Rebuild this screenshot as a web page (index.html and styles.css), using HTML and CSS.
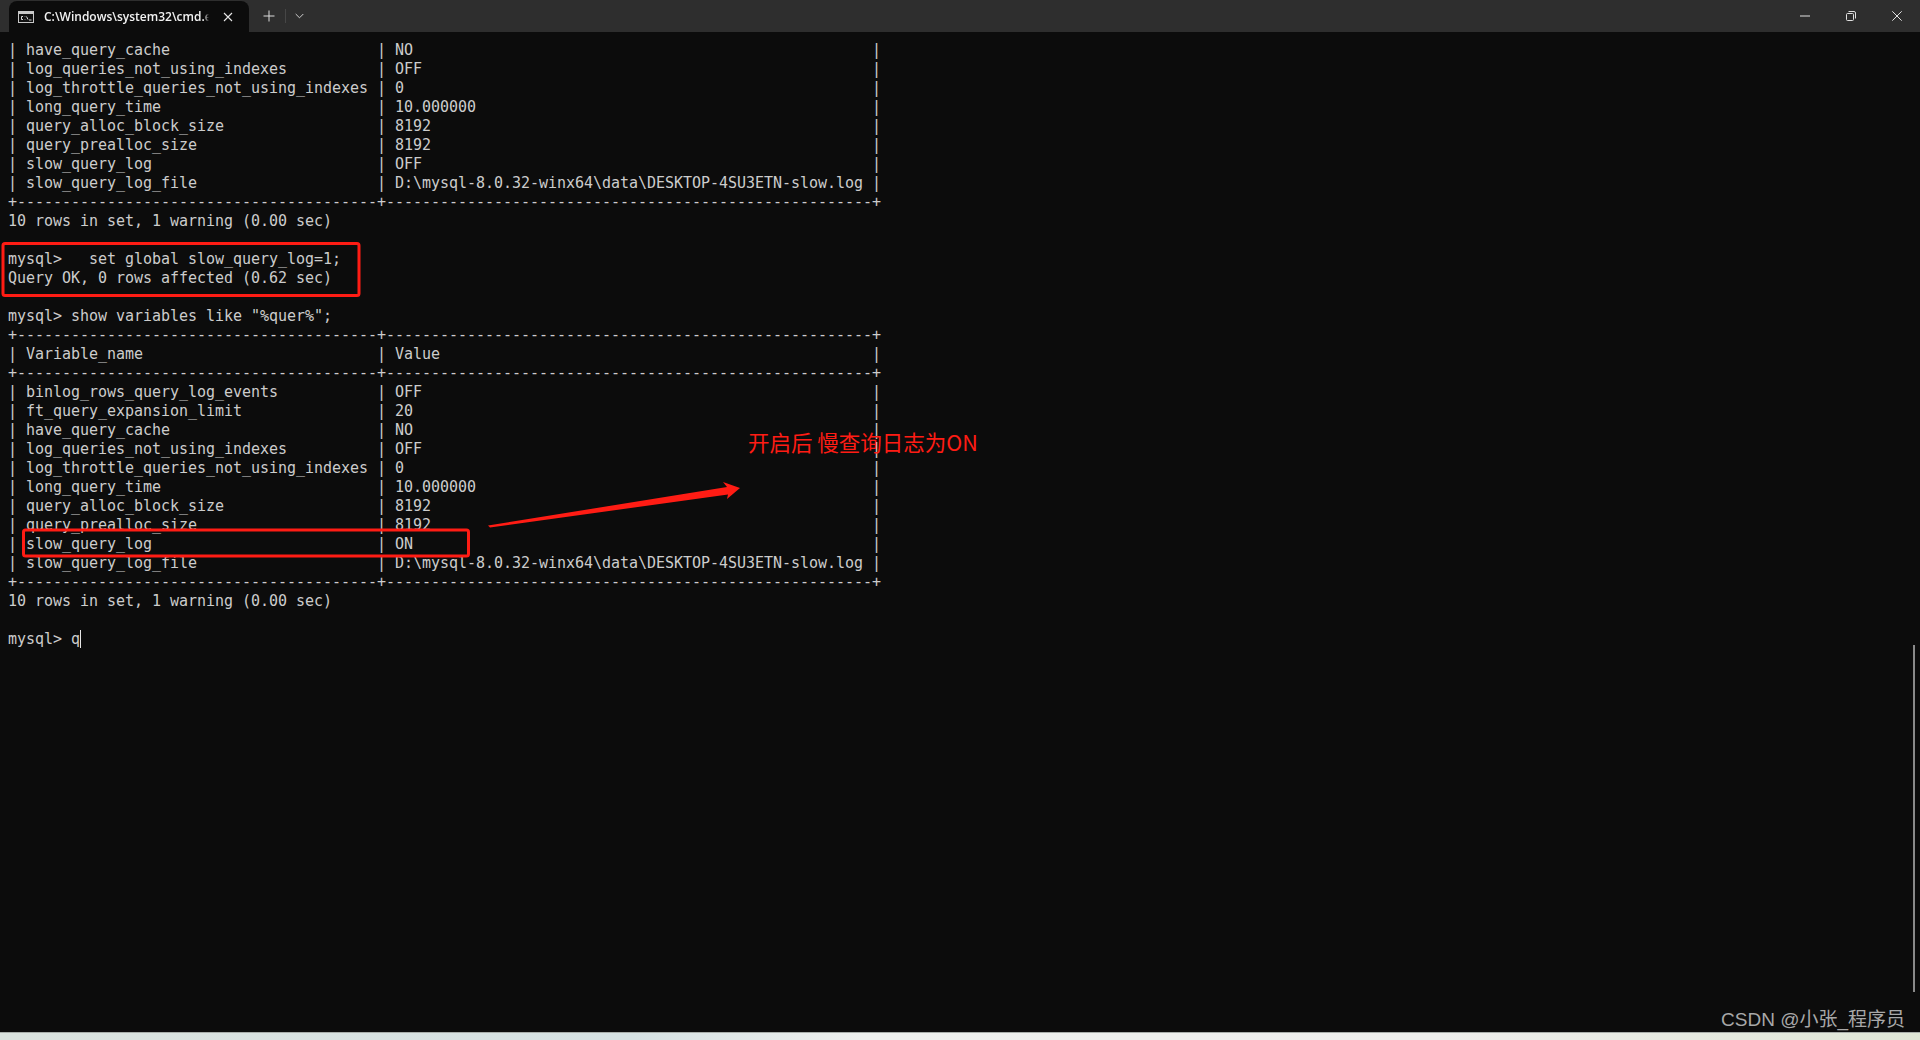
FILE: index.html
```html
<!DOCTYPE html>
<html lang="zh-CN">
<head>
<meta charset="utf-8">
<title>C:\Windows\system32\cmd.exe</title>
<link rel="stylesheet" href="styles.css">
</head>
<body>
<div class="window">
  <header class="titlebar">
    <div class="tab">
      <svg class="tab-icon" width="16" height="12" viewBox="0 0 16 12">
        <rect x="0.5" y="0.5" width="15" height="11" fill="#111" stroke="#c8c8c8"/>
        <rect x="1" y="1" width="14" height="2" fill="#c8c8c8"/>
        <path d="M5 5.5H3.5V8.5H5M7 5.5V6M7 8V8.5M8.5 5.5L10 8.5M11 9H13.5" fill="none" stroke="#d8d8d8" stroke-width="1"/>
      </svg>
      <span class="tab-label">C:\Windows\system32\cmd.exe</span>
      <svg class="tab-close" width="10" height="10" viewBox="0 0 10 10"><path d="M1 1L9 9M9 1L1 9" stroke="#e6e6e6" stroke-width="1.1" fill="none"/></svg>
    </div>
    <div class="new-tab">
      <svg width="12" height="12" viewBox="0 0 12 12"><path d="M6 0.5V11.5M0.5 6H11.5" stroke="#dcdcdc" stroke-width="1" fill="none"/></svg>
    </div>
    <div class="tab-sep"></div>
    <div class="tab-menu">
      <svg width="9" height="6" viewBox="0 0 9 6"><path d="M0.7 1L4.5 4.8L8.3 1" stroke="#d0d0d0" stroke-width="1" fill="none"/></svg>
    </div>
    <div class="controls">
      <div class="control"><svg width="10" height="2" viewBox="0 0 10 2"><path d="M0 1H10" stroke="#e0e0e0" stroke-width="1"/></svg></div>
      <div class="control"><svg width="10" height="10" viewBox="0 0 10 10"><rect x="0.5" y="2.5" width="7" height="7" rx="1" fill="none" stroke="#e0e0e0"/><path d="M2.5 0.5H8A1.5 1.5 0 0 1 9.5 2V7.5" fill="none" stroke="#e0e0e0"/></svg></div>
      <div class="control"><svg width="10" height="10" viewBox="0 0 10 10"><path d="M0.3 0.3L9.7 9.7M9.7 0.3L0.3 9.7" stroke="#e0e0e0" stroke-width="1" fill="none"/></svg></div>
    </div>
  </header>
  <main class="terminal">
<pre class="console">| have_query_cache                       | NO                                                   |
| log_queries_not_using_indexes          | OFF                                                  |
| log_throttle_queries_not_using_indexes | 0                                                    |
| long_query_time                        | 10.000000                                            |
| query_alloc_block_size                 | 8192                                                 |
| query_prealloc_size                    | 8192                                                 |
| slow_query_log                         | OFF                                                  |
| slow_query_log_file                    | D:\mysql-8.0.32-winx64\data\DESKTOP-4SU3ETN-slow.log |
+----------------------------------------+------------------------------------------------------+
10 rows in set, 1 warning (0.00 sec)

mysql>   set global slow_query_log=1;
Query OK, 0 rows affected (0.62 sec)

mysql> show variables like "%quer%";
+----------------------------------------+------------------------------------------------------+
| Variable_name                          | Value                                                |
+----------------------------------------+------------------------------------------------------+
| binlog_rows_query_log_events           | OFF                                                  |
| ft_query_expansion_limit               | 20                                                   |
| have_query_cache                       | NO                                                   |
| log_queries_not_using_indexes          | OFF                                                  |
| log_throttle_queries_not_using_indexes | 0                                                    |
| long_query_time                        | 10.000000                                            |
| query_alloc_block_size                 | 8192                                                 |
| query_prealloc_size                    | 8192                                                 |
| slow_query_log                         | ON                                                   |
| slow_query_log_file                    | D:\mysql-8.0.32-winx64\data\DESKTOP-4SU3ETN-slow.log |
+----------------------------------------+------------------------------------------------------+
10 rows in set, 1 warning (0.00 sec)

mysql> q<span class="cursor"></span></pre>
    <div class="scrollbar"></div>
  </main>
  <div class="desktop-strip"></div>
  <svg class="markup" width="1920" height="1040" viewBox="0 0 1920 1040">
    <rect x="3" y="243.5" width="356" height="52" rx="2" fill="none" stroke="#ff1c14" stroke-width="3"/>
    <rect x="23.5" y="530" width="445" height="26" rx="2" fill="none" stroke="#ff1c14" stroke-width="3"/>
    <path d="M488 525.5L727 487L723 482L740 488L727 499L728 494.5L490 527.5Z" fill="#ff1c14"/>
  </svg>
  <div class="note">开启后 慢查询日志为ON</div>
  <div class="watermark">CSDN @小张_程序员</div>
</div>
</body>
</html>
```
FILE: styles.css
```css
* { box-sizing: border-box; }
html, body { margin: 0; padding: 0; height: 100%; overflow: hidden; background: #0c0c0c; }
.window {
  position: relative;
  display: flex;
  flex-direction: column;
  width: 1920px;
  height: 1040px;
}
.titlebar {
  display: flex;
  align-items: stretch;
  flex: 0 0 32px;
  padding-left: 9px;
  background: #2e2e2e;
}
.tab {
  display: flex;
  align-items: center;
  width: 240px;
  margin-top: 1px;
  padding-left: 9px;
  background: #0c0c0c;
  border-radius: 8px 8px 0 0;
}
.tab-icon { flex: none; }
.tab-label {
  width: 165px;
  margin-left: 10px;
  overflow: hidden;
  white-space: nowrap;
  font: 600 12px/16px "Open Sans", "Noto Sans", sans-serif;
  color: #f2f2f2;
  -webkit-mask-image: linear-gradient(to right, #000 97%, transparent 100%);
  mask-image: linear-gradient(to right, #000 97%, transparent 100%);
}
.tab-close { flex: none; margin-left: 14px; }
.new-tab {
  display: flex;
  align-items: center;
  justify-content: center;
  width: 40px;
}
.new-tab svg, .tab-menu svg { display: block; }
.tab-sep {
  align-self: center;
  width: 1px;
  height: 14px;
  margin-left: -4px;
  background: #464646;
}
.tab-menu {
  display: flex;
  align-items: center;
  justify-content: center;
  width: 26px;
}
.controls { display: flex; margin-left: auto; }
.control {
  display: flex;
  align-items: center;
  justify-content: center;
  width: 46px;
}
.terminal {
  position: relative;
  flex: 1;
  padding: 9px 0 0 8px;
  background: #0c0c0c;
}
.console {
  margin: 0;
  font: 15px/19px "DejaVu Sans Mono", "Liberation Mono", monospace;
  letter-spacing: -0.03px;
  color: #cccccc;
}
.cursor {
  display: inline-block;
  width: 1px;
  height: 18px;
  vertical-align: -4px;
  background: #e6e6e6;
}
.scrollbar {
  position: absolute;
  top: 613px;
  right: 5px;
  width: 2px;
  height: 347px;
  background: #8a8a8a;
}
.desktop-strip {
  flex: 0 0 8px;
  border-top: 1px solid #a9aeaa;
  background: linear-gradient(to right, #dbe3df 0%, #d6e2e3 33%, #eef0ee 45%, #eeeeec 75%, #dfe6d6 100%);
}
.markup { position: absolute; top: 0; left: 0; pointer-events: none; }
.note {
  position: absolute;
  top: 427px;
  left: 748px;
  font: 21.5px/30px "Noto Sans CJK SC", "Liberation Sans", sans-serif;
  color: #ff1c14;
  white-space: nowrap;
}
.watermark {
  position: absolute;
  top: 1006px;
  right: 15px;
  font: 19px/28px "Liberation Sans", "Noto Sans CJK SC", sans-serif;
  color: #a8a8a8;
  white-space: nowrap;
}
```
